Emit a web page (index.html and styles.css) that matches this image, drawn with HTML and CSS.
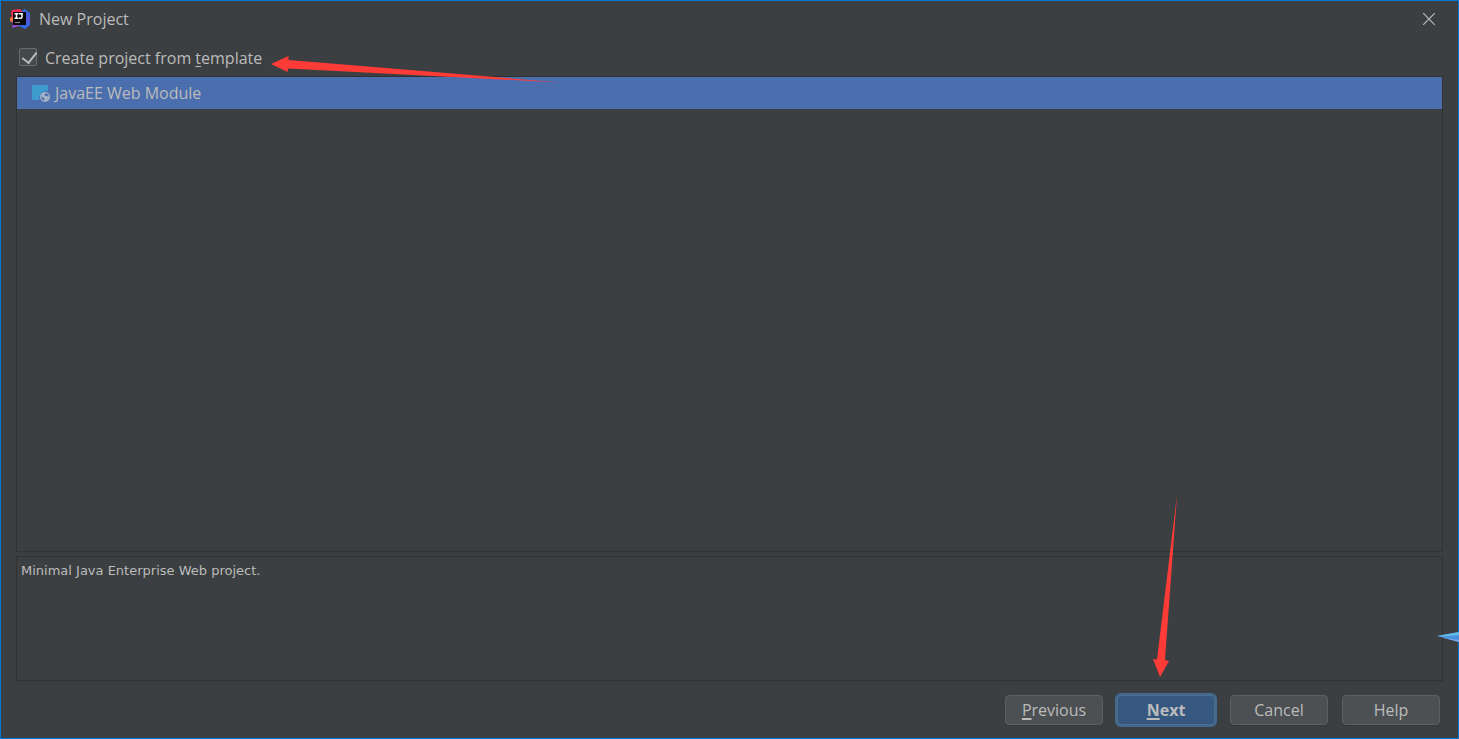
FILE: index.html
```html
<!DOCTYPE html>
<html lang="en">
<head>
<meta charset="utf-8">
<title>New Project</title>
<link rel="stylesheet" href="styles.css">
</head>
<body>
<main class="dialog">
  <header class="titlebar">
    <svg class="app-icon" width="20" height="20" viewBox="0 0 20 20" aria-hidden="true">
      <defs>
        <linearGradient id="blue" x1="0" y1="0" x2="0" y2="1"><stop offset="0" stop-color="#2b6be0"/><stop offset=".5" stop-color="#5552d6"/><stop offset="1" stop-color="#2b6df0"/></linearGradient>
        <linearGradient id="warm" x1="0" y1="0" x2="0" y2="1"><stop offset="0" stop-color="#fe2857"/><stop offset=".4" stop-color="#fb3a4c"/><stop offset=".55" stop-color="#fc801d"/><stop offset=".75" stop-color="#b04fc8"/><stop offset="1" stop-color="#8a45e6"/></linearGradient>
      </defs>
      <path d="M11 2 15 0 20 4V16L15 20 9 17Z" fill="url(#blue)"/>
      <path d="M2 1 10 0 13 4 9 17 2 19 3 14 0 12V9L2 7 1 4Z" fill="url(#warm)"/>
      <path d="M3 3H16V16H3Z" fill="#080808"/>
      <path d="M4.500 4.700H8.500M6.500 4.700V9.300M4.500 9.300H8.500M9 4.700H12V8Q12 9.300 10.700 9.300H9" fill="none" stroke="#fff" stroke-width="1.500"/>
      <path d="M5 13.500H10" stroke="#888" stroke-width="1.200"/>
    </svg>
    <h1 class="title">New Project</h1>
    <button class="close" type="button" aria-label="Close">
      <svg width="12" height="12" viewBox="0 0 12 12"><path d="M0 0 12 12M12 0 0 12" stroke="#bbb" stroke-width="1.200"/></svg>
    </button>
  </header>
  <div class="option">
    <input class="check" type="checkbox" id="template" checked>
    <label for="template">Create project from <u>t</u>emplate</label>
    <svg class="arrow-left" width="290" height="28" viewBox="0 0 290 28" aria-hidden="true"><path d="M0 8 17.500 0 17.500 4 289 26.500 17 12.500 16.500 16Z"/></svg>
  </div>
  <ul class="templates">
    <li class="template">
      <svg width="18" height="18" viewBox="0 0 18 18" aria-hidden="true">
        <path d="M0 1H16V7Q7 7 7 16H0Z" fill="#3f9bce"/>
        <circle cx="13" cy="13" r="5" fill="#a3b1c6"/>
        <path d="M13.500 9 16.200 10.500 16.500 13 14.800 12 12.500 11.500ZM9.200 12 11 13.500 12.500 14.500 12 16.500 10 15.500Z" fill="#4b6eaf"/>
      </svg>
      <span>JavaEE Web Module</span>
    </li>
  </ul>
  <p class="description">Minimal Java Enterprise Web project.</p>
  <footer class="actions">
    <button class="button" type="button"><u>P</u>revious</button>
    <div class="next">
      <button class="button primary" type="button"><u>N</u>ext</button>
      <svg class="arrow-down" width="24" height="182" viewBox="0 0 24 182" aria-hidden="true"><path d="M24 0 12 165 16 166 7 182 0 164 4 164.500Z"/></svg>
    </div>
    <button class="button" type="button">Cancel</button>
    <button class="button" type="button">Help</button>
  </footer>
  <svg class="pointer" width="22" height="12" viewBox="0 0 22 12" aria-hidden="true"><path d="M0 4 22 0V10Z" fill="#4a90dc"/><path d="M0 4 22 0V3L6 4.500Z" fill="#62bce8"/><path d="M5 5.500 22 8V10Z" fill="#78aaf0"/></svg>
</main>
</body>
</html>
```
FILE: styles.css
```css
* { box-sizing: border-box; }

body {
  margin: 0;
  background: #3c3f41;
  color: #bbb;
  font: 16px/20px "Open Sans", "Noto Sans", sans-serif;
}

.dialog {
  position: relative;
  display: flex;
  flex-direction: column;
  min-height: 100vh;
  padding: 0 16px 13px;
  border: 1px solid #0078d7;
}

.titlebar {
  display: flex;
  align-items: center;
  gap: 9px;
  height: 36px;
  margin: 0 -7px;
}

.title {
  flex: 1;
  margin: 0;
  font-size: 16px;
  font-weight: 400;
}

.close {
  display: flex;
  padding: 8px;
  margin-right: 6px;
  border: 0;
  background: none;
}

.option {
  position: relative;
  display: flex;
  align-items: center;
  gap: 8px;
  height: 39px;
  padding: 2px 2px 0;
}

.check {
  appearance: none;
  width: 18px;
  height: 18px;
  margin: 0 0 2px;
  border: 1px solid #6b6b6b;
  border-radius: 2px;
  background: #43494a;
}

.check:checked::before {
  content: "";
  display: block;
  width: 7px;
  height: 12px;
  margin: 0 5px;
  border: solid #bbb;
  border-width: 0 2px 2px 0;
  transform: rotate(38deg);
}

u {
  text-decoration-thickness: 1px;
  text-underline-offset: 2px;
  text-decoration-skip-ink: none;
}

.button u {
  text-decoration-thickness: 2px;
}

.arrow-left,
.arrow-down {
  position: absolute;
  z-index: 1;
  fill: #ff3b38;
  pointer-events: none;
}

.arrow-left {
  left: 254px;
  top: 19px;
}

.templates {
  flex: 1;
  margin: 0 -1px 4px;
  padding: 0;
  border: 1px solid #323232;
  list-style: none;
}

.template {
  display: flex;
  align-items: center;
  gap: 5px;
  height: 32px;
  padding-left: 15px;
  background: #4b6eaf;
}

.description {
  height: 125px;
  margin: 0 -1px;
  padding: 4px;
  border: 1px solid #323232;
  font: 13px/20px Verdana, "DejaVu Sans", sans-serif;
}

.actions {
  display: flex;
  justify-content: flex-end;
  gap: 14px;
  padding: 14px 2px 0;
}

.button {
  width: 98px;
  height: 30px;
  padding: 0;
  border: 1px solid #5e6060;
  border-radius: 4px;
  background: #4c5052;
  color: #bbb;
  font: inherit;
  box-shadow: 0 1px 1px #36393b;
}

.primary {
  border-color: #4c708c;
  background: #365880;
  font-weight: 700;
  box-shadow: 0 0 0 2px #43698e;
}

.next {
  position: relative;
  margin-right: 1px;
}

.arrow-down {
  right: 38px;
  bottom: 48px;
}

.pointer {
  position: absolute;
  right: -1px;
  bottom: 94px;
}
```
